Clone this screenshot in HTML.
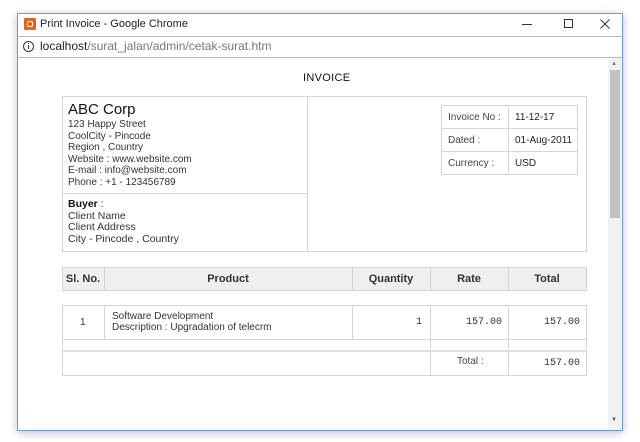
<!DOCTYPE html>
<html><head><meta charset="utf-8"><style>
*{margin:0;padding:0;box-sizing:border-box}
body{width:640px;height:442px;background:#fff;position:relative;overflow:hidden;font-family:"Liberation Sans",Arial,sans-serif;color:#333}
.a{position:absolute}
.b{position:absolute;border:1px solid #d4d4d4}
.t{position:absolute;font-size:11px;white-space:nowrap}
.m{font-family:"Liberation Mono",monospace;font-size:10px;color:#333}
.h{background:#efefef}
.hd{position:absolute;font-size:11px;font-weight:bold;color:#333;text-align:center;top:273px}
</style></head><body>
<div class="a" style="left:17px;top:13px;width:606px;height:418px;border:1px solid #6b9ddb;box-shadow:0 2px 8px rgba(0,0,0,.25);background:#fff"></div>
<div class="a" style="left:24px;top:18px;width:12px;height:12px;background:#e8641b;border-radius:1px"></div>
<div class="a" style="left:27px;top:21px;width:6px;height:6px;border:1.5px solid #fff;border-radius:2px"></div>
<div class="t" style="left:40px;top:18px;font-size:11px;color:#222">Print Invoice - Google Chrome</div>
<div class="a" style="left:522px;top:24px;width:10px;height:1px;background:#333"></div>
<div class="a" style="left:564px;top:19px;width:9px;height:9px;border:1px solid #333"></div>
<svg class="a" style="left:600px;top:19px" width="10" height="10"><path d="M0.5 0.5L9.5 9.5M9.5 0.5L0.5 9.5" stroke="#333" stroke-width="1"/></svg>
<div class="a" style="left:18px;top:36px;width:604px;height:1px;background:#bbb"></div>
<div class="a" style="left:23px;top:41px;width:11px;height:11px;border:1px solid #333;border-radius:50%"></div>
<div class="a" style="left:28px;top:43px;width:1px;height:1px;background:#333"></div>
<div class="a" style="left:28px;top:45px;width:1px;height:4px;background:#333"></div>
<div class="t" style="left:40px;top:39px;font-size:12px;color:#777"><span style="color:#222">localhost</span>/surat_jalan/admin/cetak-surat.htm</div>
<div class="a" style="left:18px;top:57px;width:604px;height:1px;background:#bbb"></div>
<div class="a" style="left:608px;top:58px;width:14px;height:372px;background:#f1f1f1"></div>
<div class="a" style="left:610px;top:70px;width:10px;height:148px;background:#c1c1c1"></div>
<div class="t" style="left:611px;top:61px;font-size:6px;color:#777">▲</div>
<div class="t" style="left:611px;top:417px;font-size:6px;color:#555">▼</div>
<div class="t" style="left:303px;top:72px;font-size:11px;color:#111;letter-spacing:.3px">INVOICE</div>
<div class="b" style="left:62px;top:96px;width:525px;height:156px"></div>
<div class="a" style="left:307px;top:96px;width:1px;height:156px;background:#d4d4d4"></div>
<div class="a" style="left:62px;top:193px;width:246px;height:1px;background:#d4d4d4"></div>
<div class="t" style="left:68px;top:101px;font-size:15px;color:#111">ABC Corp</div>
<div class="t" style="left:68px;top:119px;font-size:10px;line-height:11.6px;color:#333">123 Happy Street<br>CoolCity - Pincode<br>Region , Country<br>Website : www.website.com<br>E-mail : info@website.com<br>Phone : +1 - 123456789</div>
<div class="t" style="left:68px;top:199px;font-size:10.5px;line-height:11.6px;color:#333"><b style="color:#111">Buyer</b> :<br>Client Name<br>Client Address<br>City - Pincode , Country</div>
<div class="b" style="left:441px;top:105px;width:137px;height:70px"></div>
<div class="a" style="left:508px;top:105px;width:1px;height:70px;background:#d4d4d4"></div>
<div class="a" style="left:441px;top:128px;width:137px;height:1px;background:#d4d4d4"></div>
<div class="a" style="left:441px;top:151px;width:137px;height:1px;background:#d4d4d4"></div>
<div class="t" style="left:448px;top:112px;font-size:10px;color:#444">Invoice No :</div>
<div class="t" style="left:448px;top:135px;font-size:10px;color:#444">Dated :</div>
<div class="t" style="left:448px;top:158px;font-size:10px;color:#444">Currency :</div>
<div class="t" style="left:515px;top:112px;font-size:10px;color:#222">11-12-17</div>
<div class="t" style="left:515px;top:135px;font-size:10px;color:#222">01-Aug-2011</div>
<div class="t" style="left:515px;top:158px;font-size:10px;color:#222">USD</div>
<div class="b h" style="left:62px;top:267px;width:525px;height:24px"></div>
<div class="a" style="left:104px;top:267px;width:1px;height:24px;background:#d4d4d4"></div>
<div class="a" style="left:352px;top:267px;width:1px;height:24px;background:#d4d4d4"></div>
<div class="a" style="left:430px;top:267px;width:1px;height:24px;background:#d4d4d4"></div>
<div class="a" style="left:508px;top:267px;width:1px;height:24px;background:#d4d4d4"></div>
<div class="hd" style="left:62px;width:42px">Sl. No.</div>
<div class="hd" style="left:104px;width:248px">Product</div>
<div class="hd" style="left:352px;width:78px">Quantity</div>
<div class="hd" style="left:430px;width:78px">Rate</div>
<div class="hd" style="left:508px;width:78px">Total</div>
<div class="b" style="left:62px;top:305px;width:525px;height:71px"></div>
<div class="a" style="left:104px;top:305px;width:1px;height:34px;background:#d4d4d4"></div>
<div class="a" style="left:352px;top:305px;width:1px;height:34px;background:#d4d4d4"></div>
<div class="a" style="left:430px;top:305px;width:1px;height:71px;background:#d4d4d4"></div>
<div class="a" style="left:508px;top:305px;width:1px;height:71px;background:#d4d4d4"></div>
<div class="a" style="left:62px;top:339px;width:525px;height:1px;background:#d4d4d4"></div>
<div class="a" style="left:62px;top:350px;width:525px;height:2px;background:#e0e0e0"></div>
<div class="t" style="left:80px;top:317px;font-size:10px;color:#333">1</div>
<div class="t" style="left:112px;top:311px;font-size:10px;line-height:11px;color:#333">Software Development<br>Description : Upgradation of telecrm</div>
<div class="t m" style="left:416px;top:317px">1</div>
<div class="t m" style="left:466px;top:317px">157.00</div>
<div class="t m" style="left:544px;top:317px">157.00</div>
<div class="t" style="left:457px;top:356px;font-size:10px;color:#444">Total :</div>
<div class="t m" style="left:544px;top:358px">157.00</div>
</body></html>
